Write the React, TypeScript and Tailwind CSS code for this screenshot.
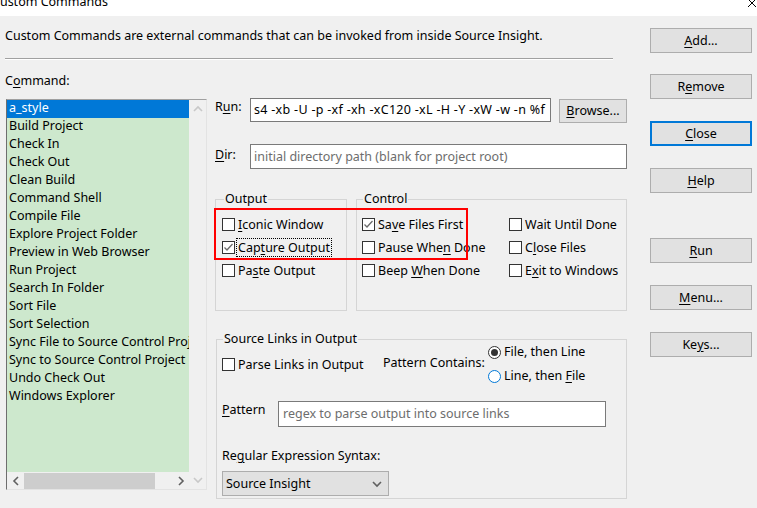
const commands = [
  'a_style',
  'Build Project',
  'Check In',
  'Check Out',
  'Clean Build',
  'Command Shell',
  'Compile File',
  'Explore Project Folder',
  'Preview in Web Browser',
  'Run Project',
  'Search In Folder',
  'Sort File',
  'Sort Selection',
  'Sync File to Source Control Project',
  'Sync to Source Control Project',
  'Undo Check Out',
  'Windows Explorer',
]

// label with an underlined access key
function Mn({ t, i }: { t: string; i: number }) {
  if (i < 0) return <>{t}</>
  return (
    <>
      {t.slice(0, i)}
      <span className="underline decoration-1 underline-offset-[2px]">{t[i]}</span>
      {t.slice(i + 1)}
    </>
  )
}

function CheckBox({ t, i, checked, focus }: { t: string; i: number; checked?: boolean; focus?: boolean }) {
  return (
    <div className="flex h-[23px] items-center">
      <div className="flex h-[13px] w-[13px] shrink-0 items-center justify-center border border-[#333333] bg-white">
        {checked && (
          <svg width="11" height="11" viewBox="0 0 11 11">
            <polyline points="1.5,5.5 4,8 9.5,2" fill="none" stroke="#6b6b6b" strokeWidth="1.3" />
          </svg>
        )}
      </div>
      <span
        className={`ml-[2px] whitespace-nowrap px-[1px] leading-[17px] ${
          focus ? 'outline-1 outline-dotted outline-[#000]' : ''
        }`}
      >
        <Mn t={t} i={i} />
      </span>
    </div>
  )
}

function Radio({ t, i, checked, hover }: { t: string; i: number; checked?: boolean; hover?: boolean }) {
  return (
    <div className="flex h-[24px] items-center">
      <div
        className={`flex h-[13px] w-[13px] items-center justify-center rounded-full border bg-white ${
          hover ? 'border-[#0078d7]' : 'border-[#333333]'
        }`}
      >
        {checked && <div className="h-[7px] w-[7px] rounded-full bg-[#333333]" />}
      </div>
      <span className="ml-[3px] whitespace-nowrap leading-[16px]">
        <Mn t={t} i={i} />
      </span>
    </div>
  )
}

function Button({ t, i, def }: { t: string; i: number; def?: boolean }) {
  return (
    <div
      className={`flex h-[25px] w-[102px] items-center justify-center bg-[#e1e1e1] leading-[16px] ${
        def ? 'border-2 border-[#0078d7]' : 'border border-[#adadad]'
      }`}
    >
      <Mn t={t} i={i} />
    </div>
  )
}

function Chevron({ dir, color }: { dir: 'up' | 'down' | 'left' | 'right'; color: string }) {
  const pts = {
    up: '1,6 5,2 9,6',
    down: '1,2 5,6 9,2',
    left: '6,1 2,5 6,9',
    right: '2,1 6,5 2,9',
  }[dir]
  const wide = dir === 'up' || dir === 'down'
  return (
    <svg width={wide ? 10 : 8} height={wide ? 8 : 10} viewBox={wide ? '0 0 10 8' : '0 0 8 10'}>
      <polyline points={pts} fill="none" stroke={color} strokeWidth="1.6" />
    </svg>
  )
}

function CommandList() {
  return (
    <div className="ml-[6px] flex h-[391px] w-[201px] border border-t-[#a0a0a0] border-l-[#6e6e6e] border-r-[#e3e3e3] border-b-[#e3e3e3]">
      <div className="flex w-[182px] flex-col">
        <div className="flex-1 overflow-hidden bg-[#cde8cd]">
          {commands.map((c, idx) => (
            <div
              key={c}
              className={`h-[18px] whitespace-nowrap px-[2px] leading-[16px] ${
                idx === 0 ? 'bg-[#0078d7] text-white' : ''
              }`}
            >
              {c}
            </div>
          ))}
        </div>
        <div className="flex h-[17px] items-center bg-[#f0f0f0]">
          <div className="flex w-[17px] justify-center">
            <Chevron dir="left" color="#606060" />
          </div>
          <div className="h-[16px] w-[131px] bg-[#cdcdcd]" />
          <div className="flex flex-1 justify-end pr-[4px]">
            <Chevron dir="right" color="#606060" />
          </div>
        </div>
      </div>
      <div className="flex w-[17px] flex-col items-center justify-between bg-[#f0f0f0] py-[5px]">
        <Chevron dir="up" color="#c8c8c8" />
        <Chevron dir="down" color="#c8c8c8" />
      </div>
    </div>
  )
}

export default function App() {
  return (
    <div className="flex h-[508px] w-[757px] flex-col overflow-hidden bg-[#f0f0f0] font-['Noto_Sans',sans-serif] text-[12.5px] text-black">
      <div className="flex h-[16px] shrink-0 justify-between overflow-hidden bg-white">
        <span className="-ml-[8px] -mt-[6px] whitespace-nowrap leading-[16px]">Custom Commands</span>
        <svg width="10" height="10" viewBox="0 0 10 10" className="-mt-[2px]">
          <path d="M1 1 L9 9 M9 1 L1 9" stroke="#000" strokeWidth="1" />
        </svg>
      </div>

      <div className="flex flex-1">
        <div className="flex w-[640px] flex-col">
          <p className="ml-[5px] mt-[12px] whitespace-nowrap leading-[16px]">
            Custom Commands are external commands that can be invoked from inside Source Insight.
          </p>
          <div className="ml-[5px] mt-[14px] h-[2px] w-[608px] border-t border-b border-t-[#a0a0a0] border-b-white" />
          <div className="ml-[5px] mt-[13px] leading-[16px]">
            <Mn t="Command:" i={1} />
          </div>

          <div className="mt-[10px] flex">
            <CommandList />

            <div className="-mt-[1px] ml-[8px] flex w-[412px] flex-col">
              <div className="flex h-[25px] items-start">
                <span className="mt-[1px] w-[35px] leading-[16px]">
                  <Mn t="Run:" i={1} />
                </span>
                <div className="h-[24px] w-[301px] overflow-hidden whitespace-nowrap border border-[#7a7a7a] bg-white px-[3px] leading-[22px] tracking-[0.3px]">
                  s4 -xb -U -p -xf -xh -xC120 -xL -H -Y -xW -w -n %f
                </div>
                <div className="ml-[8px] mt-[1px] flex h-[24px] w-[68px] items-center justify-center border border-[#adadad] bg-[#e1e1e1]">
                  <Mn t="Browse..." i={0} />
                </div>
              </div>

              <div className="mt-[21px] flex items-start">
                <span className="mt-[3px] w-[35px] leading-[16px]">
                  <Mn t="Dir:" i={0} />
                </span>
                <div className="h-[25px] w-[377px] border border-[#7a7a7a] bg-white px-[3px] leading-[23px] text-[#6d6d6d]">
                  initial directory path (blank for project root)
                </div>
              </div>

              <div className="relative mt-[22px] flex gap-[9px]">
                <fieldset className="h-[120px] w-[132px] border border-[#d5d5d5] pl-[6px]">
                  <legend className="ml-[2px] px-[1px] leading-[16px]">Output</legend>
                  <div className="pt-[6px]">
                    <CheckBox t="Iconic Window" i={0} />
                    <CheckBox t="Capture Output" i={3} checked focus />
                    <CheckBox t="Paste Output" i={2} />
                  </div>
                </fieldset>
                <fieldset className="h-[120px] w-[271px] border border-[#d5d5d5] pl-[5px]">
                  <legend className="ml-[1px] px-[1px] leading-[16px]">Control</legend>
                  <div className="grid grid-cols-[147px_1fr] pt-[6px]">
                    <CheckBox t="Save Files First" i={2} checked />
                    <CheckBox t="Wait Until Done" i={-1} />
                    <CheckBox t="Pause When Done" i={9} />
                    <CheckBox t="Close Files" i={1} />
                    <CheckBox t="Beep When Done" i={5} />
                    <CheckBox t="Exit to Windows" i={1} />
                  </div>
                </fieldset>
                {/* highlight drawn over the dialog */}
                <div className="absolute -left-[1px] top-[17px] h-[52px] w-[254px] border-2 border-[#ff0000]" />
              </div>

              <fieldset className="ml-[1px] mt-[20px] h-[168px] w-[411px] border border-[#d5d5d5] pl-[5px]">
                <legend className="ml-[1px] px-[1px] leading-[16px]">Source Links in Output</legend>
                <div className="-mt-[7px] flex h-[48px] items-center">
                  <div className="w-[161px]">
                    <CheckBox t="Parse Links in Output" i={-1} />
                  </div>
                  <span className="-mt-[3px] w-[105px] whitespace-nowrap leading-[16px]">Pattern Contains:</span>
                  <div className="flex flex-col">
                    <Radio t="File, then Line" i={-1} checked />
                    <Radio t="Line, then File" i={11} hover />
                  </div>
                </div>
                <div className="mt-[13px] flex items-start">
                  <span className="mt-[1px] w-[56px] leading-[16px]">
                    <Mn t="Pattern" i={0} />
                  </span>
                  <div className="h-[26px] w-[328px] border border-[#7a7a7a] bg-white px-[4px] leading-[24px] text-[#6d6d6d]">
                    regex to parse output into source links
                  </div>
                </div>
                <div className="mt-[21px] leading-[16px]">
                  <Mn t="Regular Expression Syntax:" i={2} />
                </div>
                <div className="mt-[7px] flex h-[25px] w-[167px] items-center justify-between border border-[#adadad] bg-[#e1e1e1] pl-[3px] pr-[6px] pt-[1px]">
                  <span>Source Insight</span>
                  <Chevron dir="down" color="#606060" />
                </div>
              </fieldset>
            </div>
          </div>
        </div>

        <div className="ml-[10px] flex flex-col pt-[12px]">
          <Button t="Add..." i={0} />
          <div className="mt-[21px]">
            <Button t="Remove" i={1} />
          </div>
          <div className="mt-[22px]">
            <Button t="Close" i={0} def />
          </div>
          <div className="mt-[22px]">
            <Button t="Help" i={0} />
          </div>
          <div className="mt-[45px]">
            <Button t="Run" i={0} />
          </div>
          <div className="mt-[22px]">
            <Button t="Menu..." i={0} />
          </div>
          <div className="mt-[22px]">
            <Button t="Keys..." i={2} />
          </div>
        </div>
      </div>
    </div>
  )
}
